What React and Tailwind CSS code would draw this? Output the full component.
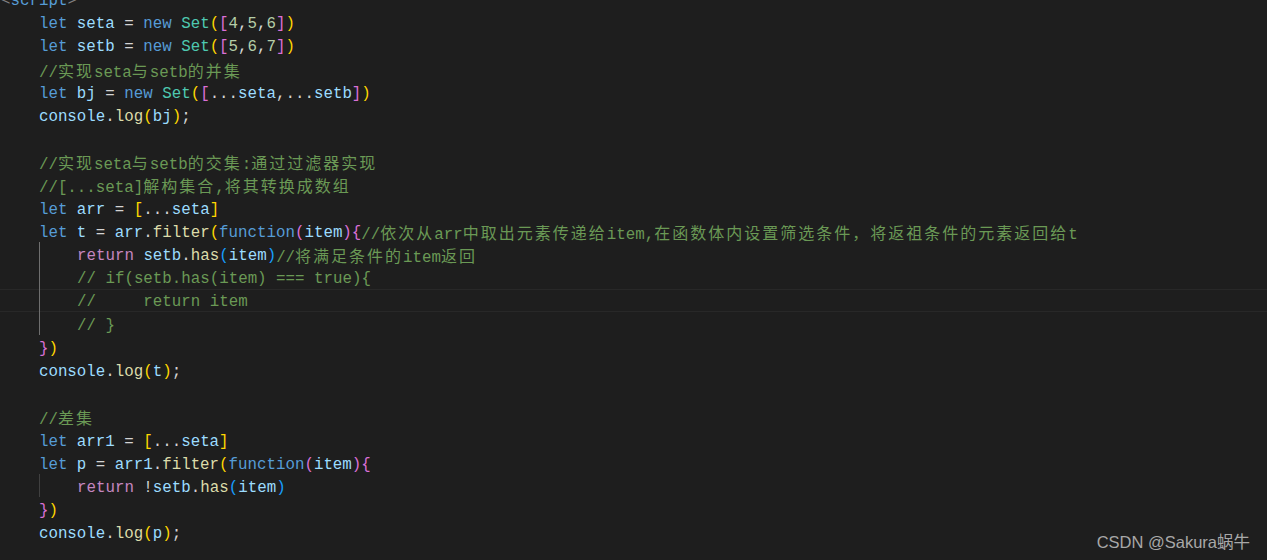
import React from 'react';

const C = {
  kw: 'text-[#569cd6]',
  v: 'text-[#9cdcfe]',
  cls: 'text-[#4ec9b0]',
  num: 'text-[#b5cea8]',
  cm: 'text-[#6a9955]',
  ctl: 'text-[#c586c0]',
  fn: 'text-[#dcdcaa]',
  p: 'text-[#d4d4d4]',
  tag: 'text-[#808080]',
  b1: 'text-[#ffd700]',
  b2: 'text-[#da70d6]',
  b3: 'text-[#179fff]',
};

const CJK = /([\u3000-\u9fff\uff00-\uffef]+)/;

// split a token so CJK runs get their own wider spacing
function Tok({ text, kind }) {
  const parts = text.split(CJK).filter(Boolean);
  return (
    <span className={C[kind]}>
      {parts.map((s, i) =>
        CJK.test(s) ? (
          <span key={i} className="font-['Noto_Sans_CJK_SC',sans-serif] text-[16px] tracking-[2px]">{s}</span>
        ) : (
          <span key={i}>{s}</span>
        )
      )}
    </span>
  );
}

const lines = [
  { t: [['<', 'tag'], ['script', 'kw'], ['>', 'tag']] },
  { t: [['    ', 'p'], ['let', 'kw'], [' ', 'p'], ['seta', 'v'], [' = ', 'p'], ['new', 'kw'], [' ', 'p'], ['Set', 'cls'], ['(', 'b1'], ['[', 'b2'], ['4', 'num'], [',', 'p'], ['5', 'num'], [',', 'p'], ['6', 'num'], [']', 'b2'], [')', 'b1']] },
  { t: [['    ', 'p'], ['let', 'kw'], [' ', 'p'], ['setb', 'v'], [' = ', 'p'], ['new', 'kw'], [' ', 'p'], ['Set', 'cls'], ['(', 'b1'], ['[', 'b2'], ['5', 'num'], [',', 'p'], ['6', 'num'], [',', 'p'], ['7', 'num'], [']', 'b2'], [')', 'b1']] },
  { t: [['    //实现seta与setb的并集', 'cm']] },
  { t: [['    ', 'p'], ['let', 'kw'], [' ', 'p'], ['bj', 'v'], [' = ', 'p'], ['new', 'kw'], [' ', 'p'], ['Set', 'cls'], ['(', 'b1'], ['[', 'b2'], ['...', 'p'], ['seta', 'v'], [',...', 'p'], ['setb', 'v'], [']', 'b2'], [')', 'b1']] },
  { t: [['    ', 'p'], ['console', 'v'], ['.', 'p'], ['log', 'fn'], ['(', 'b1'], ['bj', 'v'], [')', 'b1'], [';', 'p']] },
  { t: [] },
  { t: [['    //实现seta与setb的交集:通过过滤器实现', 'cm']] },
  { t: [['    //[...seta]解构集合,将其转换成数组', 'cm']] },
  { t: [['    ', 'p'], ['let', 'kw'], [' ', 'p'], ['arr', 'v'], [' = ', 'p'], ['[', 'b1'], ['...', 'p'], ['seta', 'v'], [']', 'b1']] },
  { t: [['    ', 'p'], ['let', 'kw'], [' ', 'p'], ['t', 'v'], [' = ', 'p'], ['arr', 'v'], ['.', 'p'], ['filter', 'fn'], ['(', 'b1'], ['function', 'kw'], ['(', 'b2'], ['item', 'v'], [')', 'b2'], ['{', 'b2'], ['//依次从arr中取出元素传递给item,在函数体内设置筛选条件，将返祖条件的元素返回给t', 'cm']] },
  { g: 'active', t: [['return', 'ctl'], [' ', 'p'], ['setb', 'v'], ['.', 'p'], ['has', 'fn'], ['(', 'b3'], ['item', 'v'], [')', 'b3'], ['//将满足条件的item返回', 'cm']] },
  { g: 'active', t: [['// if(setb.has(item) === true){', 'cm']] },
  { g: 'active', hl: true, t: [['//     return item', 'cm']] },
  { g: 'active', t: [['// }', 'cm']] },
  { t: [['    ', 'p'], ['}', 'b2'], [')', 'b1']] },
  { t: [['    ', 'p'], ['console', 'v'], ['.', 'p'], ['log', 'fn'], ['(', 'b1'], ['t', 'v'], [')', 'b1'], [';', 'p']] },
  { t: [] },
  { t: [['    //差集', 'cm']] },
  { t: [['    ', 'p'], ['let', 'kw'], [' ', 'p'], ['arr1', 'v'], [' = ', 'p'], ['[', 'b1'], ['...', 'p'], ['seta', 'v'], [']', 'b1']] },
  { t: [['    ', 'p'], ['let', 'kw'], [' ', 'p'], ['p', 'v'], [' = ', 'p'], ['arr1', 'v'], ['.', 'p'], ['filter', 'fn'], ['(', 'b1'], ['function', 'kw'], ['(', 'b2'], ['item', 'v'], [')', 'b2'], ['{', 'b2']] },
  { g: 'idle', t: [['return', 'ctl'], [' !', 'p'], ['setb', 'v'], ['.', 'p'], ['has', 'fn'], ['(', 'b3'], ['item', 'v'], [')', 'b3']] },
  { t: [['    ', 'p'], ['}', 'b2'], [')', 'b1']] },
  { t: [['    ', 'p'], ['console', 'v'], ['.', 'p'], ['log', 'fn'], ['(', 'b1'], ['p', 'v'], [')', 'b1'], [';', 'p']] },
];

function Line({ line }) {
  return (
    <div
      className={
        'flex h-[23.2px] whitespace-pre pl-px ' +
        (line.hl ? 'shadow-[inset_0_1px_#282828,inset_0_-1px_#282828]' : '')
      }
    >
      {line.g && (
        <>
          <span className="w-[38px] shrink-0" />
          <span
            className={
              'w-[38px] shrink-0 border-l ' +
              (line.g === 'active' ? 'border-[#6e6e6e]' : 'border-[#404040]')
            }
          />
        </>
      )}
      <div className="flex items-center pt-[6px]">
        {line.t.map(([text, kind], i) => (
          <Tok key={i} text={text} kind={kind} />
        ))}
      </div>
    </div>
  );
}

export default function App() {
  return (
    <div className="relative h-[560px] w-full overflow-hidden bg-[#1e1e1e] font-['Liberation_Mono',monospace] text-[15.8px]">
      <div className="-mt-[12.8px]">
        {lines.map((line, i) => (
          <Line key={i} line={line} />
        ))}
      </div>
      <div className="absolute right-[17px] top-[530px] font-['Liberation_Sans','Noto_Sans_CJK_SC',sans-serif] text-[16.5px] text-[#a8a8a8]">
        CSDN @Sakura蜗牛
      </div>
    </div>
  );
}
